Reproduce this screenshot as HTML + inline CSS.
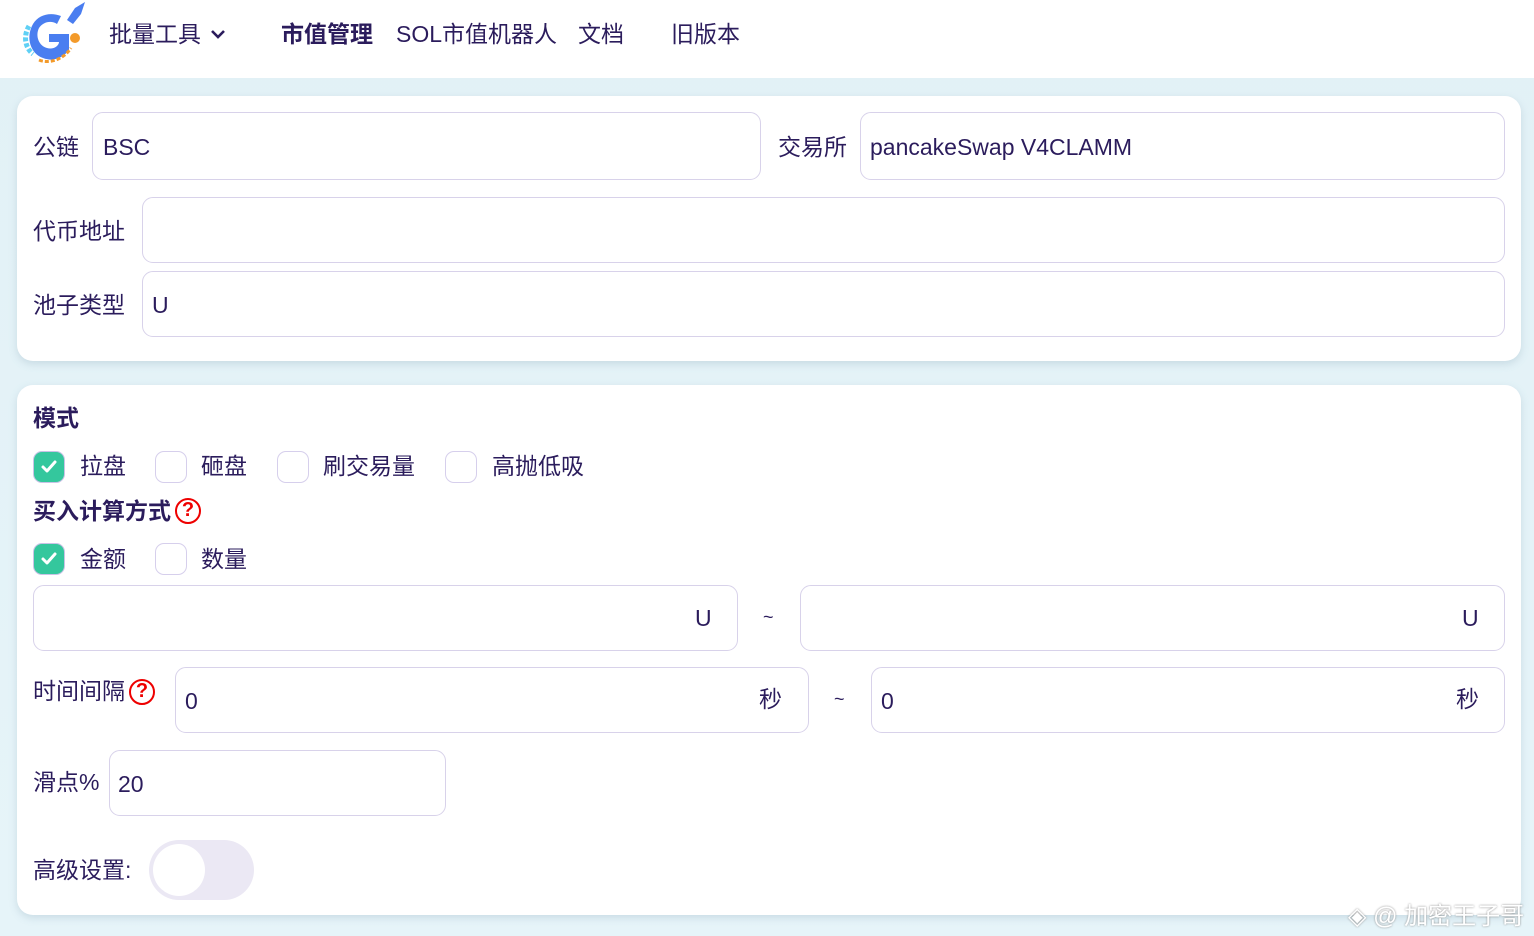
<!DOCTYPE html>
<html><head><meta charset="utf-8"><style>
*{box-sizing:border-box;margin:0;padding:0}
body{width:1534px;height:936px;overflow:hidden;background:linear-gradient(180deg,#e2f1f6,#e6f4f9);font-family:"Liberation Sans","Noto Sans CJK SC",sans-serif;color:#2b1c5c;position:relative}
.a{position:absolute;white-space:nowrap}
.hdr{position:absolute;left:0;top:0;width:1534px;height:78px;background:#fff}
.card{position:absolute;left:17px;width:1504px;background:#fff;border-radius:16px;box-shadow:0 3px 8px rgba(120,150,170,.25)}
.in{position:absolute;border:1px solid #d8d2ea;border-radius:11px;background:#fff}
.t{font-size:23px;line-height:1}
.cb{position:absolute;width:32px;height:32px;border:1px solid #d6cfec;border-radius:9px;background:#fff}
.cb.on{background:#34c79d;border-color:#c9c2e6}
.q{position:absolute;width:26px;height:26px;border:2.5px solid #e00;border-radius:50%;color:#e00;font-size:20px;line-height:21px;text-align:center;font-weight:bold}
</style></head><body>
<div class="hdr"></div>
<svg class="a" style="left:17px;top:2px" width="70" height="62" viewBox="0 0 70 62">
<path d="M16 22 C22 12 34 10 44 14 L40 22 C34 18 26 20 22 26 C18 34 22 44 30 46 C36 48 42 44 42 40 L32 40 L32 32 L52 32 L52 48 C46 56 36 60 26 56 C14 52 8 36 16 22Z" fill="#4a7ef0"/>
<path d="M12 24 C6 34 8 46 16 52" stroke="#5fd0f5" stroke-width="5" fill="none" stroke-dasharray="4 2"/>
<path d="M58 6 L68 0 L64 12 L56 22 L50 18Z" fill="#4a7df0"/>
<circle cx="58" cy="36" r="5" fill="#f39a2a"/>
<path d="M22 58 C32 62 46 58 54 46" stroke="#f39a2a" stroke-width="3" fill="none" stroke-dasharray="4 2"/>
</svg>
<div class="a t" style="left:109px;top:23px">批量工具</div>
<svg class="a" style="left:209px;top:28px" width="18" height="14"><path d="M3 3 L9 9 L15 3" stroke="#2b1c5c" stroke-width="2.6" fill="none"/></svg>
<div class="a t" style="left:281px;top:23px;font-weight:bold">市值管理</div>
<div class="a t" style="left:396px;top:23px">SOL市值机器人</div>
<div class="a t" style="left:578px;top:23px">文档</div>
<div class="a t" style="left:671px;top:23px">旧版本</div>

<div class="card" style="top:96px;height:265px"></div>
<div class="a t" style="left:33px;top:136px">公链</div>
<div class="in" style="left:92px;top:112px;width:669px;height:68px"></div>
<div class="a t" style="left:103px;top:136px">BSC</div>
<div class="a t" style="left:778px;top:136px">交易所</div>
<div class="in" style="left:860px;top:112px;width:645px;height:68px"></div>
<div class="a t" style="left:870px;top:136px">pancakeSwap V4CLAMM</div>
<div class="a t" style="left:33px;top:220px">代币地址</div>
<div class="in" style="left:142px;top:197px;width:1363px;height:66px"></div>
<div class="a t" style="left:33px;top:294px">池子类型</div>
<div class="in" style="left:142px;top:271px;width:1363px;height:66px"></div>
<div class="a t" style="left:152px;top:294px">U</div>

<div class="card" style="top:385px;height:530px"></div>
<div class="a t" style="left:33px;top:407px;font-weight:bold">模式</div>
<div class="cb on" style="left:33px;top:451px"></div>
<svg class="a" style="left:33px;top:451px" width="32" height="32"><path d="M10 16 L14 20 L22 11" stroke="#fff" stroke-width="3" fill="none" stroke-linecap="round" stroke-linejoin="round"/></svg>
<div class="a t" style="left:80px;top:455px">拉盘</div>
<div class="cb" style="left:155px;top:451px"></div>
<div class="a t" style="left:201px;top:455px">砸盘</div>
<div class="cb" style="left:277px;top:451px"></div>
<div class="a t" style="left:323px;top:455px">刷交易量</div>
<div class="cb" style="left:445px;top:451px"></div>
<div class="a t" style="left:492px;top:455px">高抛低吸</div>
<div class="a t" style="left:33px;top:500px;font-weight:bold">买入计算方式</div>
<div class="q" style="left:175px;top:498px">?</div>
<div class="cb on" style="left:33px;top:543px"></div>
<svg class="a" style="left:33px;top:543px" width="32" height="32"><path d="M10 16 L14 20 L22 11" stroke="#fff" stroke-width="3" fill="none" stroke-linecap="round" stroke-linejoin="round"/></svg>
<div class="a t" style="left:80px;top:548px">金额</div>
<div class="cb" style="left:155px;top:543px"></div>
<div class="a t" style="left:201px;top:548px">数量</div>

<div class="in" style="left:33px;top:585px;width:705px;height:66px"></div>
<div class="a t" style="left:695px;top:607px">U</div>
<div class="a" style="left:763px;top:607px;font-size:18px">~</div>
<div class="in" style="left:800px;top:585px;width:705px;height:66px"></div>
<div class="a t" style="left:1462px;top:607px">U</div>

<div class="a t" style="left:33px;top:680px">时间间隔</div>
<div class="q" style="left:129px;top:679px">?</div>
<div class="in" style="left:175px;top:667px;width:634px;height:66px"></div>
<div class="a t" style="left:185px;top:690px">0</div>
<div class="a t" style="left:759px;top:688px">秒</div>
<div class="a" style="left:834px;top:689px;font-size:18px">~</div>
<div class="in" style="left:871px;top:667px;width:634px;height:66px"></div>
<div class="a t" style="left:881px;top:690px">0</div>
<div class="a t" style="left:1456px;top:688px">秒</div>

<div class="a t" style="left:33px;top:771px">滑点%</div>
<div class="in" style="left:109px;top:750px;width:337px;height:66px"></div>
<div class="a t" style="left:118px;top:773px">20</div>

<div class="a t" style="left:33px;top:859px">高级设置:</div>
<div class="a" style="left:149px;top:840px;width:105px;height:60px;border-radius:30px;background:#ebe8f4"></div>
<div class="a" style="left:153px;top:844px;width:52px;height:52px;border-radius:50%;background:#fff"></div>
<div class="a" style="left:1348px;top:896px;font-size:24px;color:#fff;text-shadow:0 0 2px #888">◈ @ 加密王子哥</div>
</body></html>
